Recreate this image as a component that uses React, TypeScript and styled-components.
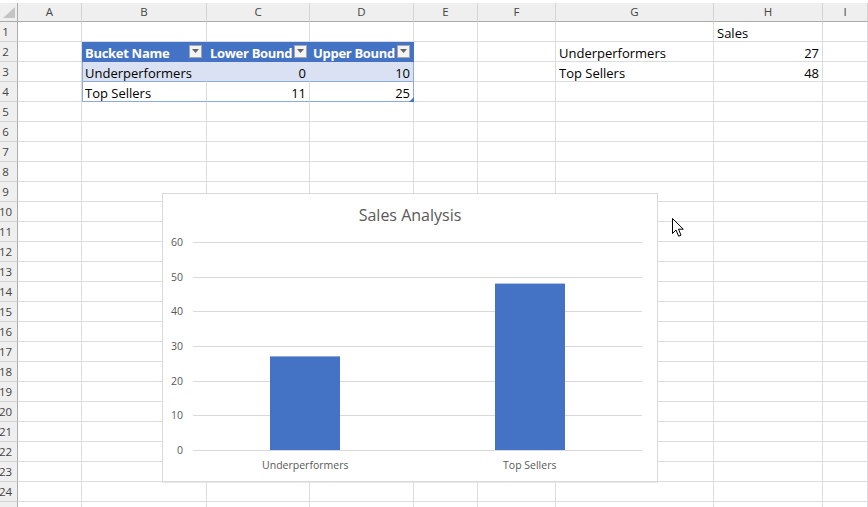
import styled, { createGlobalStyle } from "styled-components";

const GlobalStyle = createGlobalStyle`
  html, body {
    margin: 0;
    padding: 0;
    background: #fff;
    overflow: hidden;
  }
  body {
    font-family: "Open Sans", "Noto Sans", sans-serif;
  }
  * {
    box-sizing: border-box;
  }
`;

type Kind = "plain" | "head" | "band" | "body";

interface CellData {
  text: string;
  align?: "left" | "right";
}

const COLUMNS = ["A", "B", "C", "D", "E", "F", "G", "H", "I"];
const ROW_COUNT = 25;
const LAST_NUMBERED_ROW = 24;
const TABLE_COLS = ["B", "C", "D"];

const values: Record<string, CellData> = {
  B2: { text: "Bucket Name" },
  C2: { text: "Lower Bound" },
  D2: { text: "Upper Bound" },
  B3: { text: "Underperformers" },
  C3: { text: "0", align: "right" },
  D3: { text: "10", align: "right" },
  B4: { text: "Top Sellers" },
  C4: { text: "11", align: "right" },
  D4: { text: "25", align: "right" },
  H1: { text: "Sales" },
  G2: { text: "Underperformers" },
  H2: { text: "27", align: "right" },
  G3: { text: "Top Sellers" },
  H3: { text: "48", align: "right" },
};

const sales = [
  { label: "Underperformers", value: 27 },
  { label: "Top Sellers", value: 48 },
];

function tableKind(col: string, row: number): Kind {
  if (!TABLE_COLS.includes(col)) return "plain";
  if (row === 2) return "head";
  if (row === 3) return "band";
  if (row === 4) return "body";
  return "plain";
}

const GRID = "#dadcdd";
const TABLE_LINE = "#8ea9db";
const fills: Record<Kind, string> = {
  plain: "#fff",
  head: "#4472c4",
  band: "#d9e1f2",
  body: "#fff",
};

function rightLine(kind: Kind, last: boolean) {
  if (kind === "plain") return GRID;
  if (kind === "head") return fills.head;
  if (last) return TABLE_LINE;
  return kind === "band" ? fills.band : GRID;
}

function bottomLine(kind: Kind) {
  if (kind === "plain") return GRID;
  if (kind === "head") return fills.head;
  return TABLE_LINE;
}

export default function App() {
  const rows = Array.from({ length: ROW_COUNT }, (_, i) => i + 1);

  return (
    <>
      <GlobalStyle />
      <Sheet>
        <TopStrip />
        <Corner />
        {COLUMNS.map((c) => (
          <ColHead key={c}>{c}</ColHead>
        ))}
        {rows.map((row) => (
          <Row key={row} row={row} />
        ))}
        <SalesChart />
        <Pointer />
      </Sheet>
    </>
  );
}

function Row({ row }: { row: number }) {
  return (
    <>
      <RowHead>{row <= LAST_NUMBERED_ROW ? row : ""}</RowHead>
      {COLUMNS.map((col) => {
        const data = values[col + row];
        const kind = tableKind(col, row);
        return (
          <Cell
            key={col}
            $kind={kind}
            $right={data?.align === "right"}
            $first={col === "B"}
            $last={col === "D"}
          >
            {data && <span>{data.text}</span>}
            {kind === "head" && <FilterButton />}
            {kind === "body" && col === "D" && <ResizeHandle />}
          </Cell>
        );
      })}
    </>
  );
}

function FilterButton() {
  return (
    <Filter>
      <svg width="7" height="4" viewBox="0 0 7 4">
        <path d="M0 0h7L3.5 4z" fill="#666" />
      </svg>
    </Filter>
  );
}

function SalesChart() {
  const plotLeft = 30;
  const plotRight = 479;
  const zeroY = 226;
  const step = 208 / 6;
  const catWidth = (plotRight - plotLeft) / sales.length;
  const ticks = [0, 1, 2, 3, 4, 5, 6];

  return (
    <ChartBox>
      <ChartTitle>Sales Analysis</ChartTitle>
      <svg width="494" height="257" viewBox="0 0 494 257">
        {ticks.map((t) => {
          const y = Math.round(zeroY - t * step) + 0.5;
          return (
            <g key={t}>
              <line
                x1={plotLeft}
                x2={plotRight}
                y1={y}
                y2={y}
                stroke="#d9d9d9"
                strokeWidth="1"
                shapeRendering="crispEdges"
              />
              <AxisText x={20} y={y + 3.6} textAnchor="end">
                {t * 10}
              </AxisText>
            </g>
          );
        })}
        {sales.map((s, i) => {
          const center = plotLeft + catWidth * i + catWidth / 2;
          const h = (s.value / 10) * step;
          return (
            <g key={s.label}>
              <rect
                x={Math.round(center - 35)}
                y={zeroY - h}
                width="70"
                height={h}
                fill="#4472c4"
              />
              <AxisText x={center} y={245} textAnchor="middle">
                {s.label}
              </AxisText>
            </g>
          );
        })}
      </svg>
    </ChartBox>
  );
}

function Pointer() {
  return (
    <Cursor width="13" height="20" viewBox="0 0 13 20">
      <path
        d="M0.5 0.5 L0.5 15.5 L4 12 L6.6 18.2 L9 17.2 L6.5 11.2 L11.3 11.2 Z"
        fill="#fff"
        stroke="#000"
        strokeWidth="1"
        strokeLinejoin="miter"
      />
    </Cursor>
  );
}

const Sheet = styled.div`
  position: relative;
  display: grid;
  grid-template-columns: 18px 64px 125px 103px 104px 64px 78px 158px 109px 1fr;
  grid-template-rows: 3px 19px;
  grid-auto-rows: 20px;
  width: 868px;
  height: 507px;
  overflow: hidden;
  font-family: "Open Sans", "Noto Sans", sans-serif;
`;

const TopStrip = styled.div`
  grid-column: 1 / -1;
  background: #fff;
`;

const Corner = styled.div`
  position: relative;
  background: #efefef;
  border-right: 1px solid #ababab;
  border-bottom: 1px solid #ababab;

  &::after {
    content: "";
    position: absolute;
    right: 2px;
    bottom: 3px;
    width: 12px;
    height: 11px;
    background: #c4c4c4;
    clip-path: polygon(100% 0, 100% 100%, 0 100%);
  }
`;

const ColHead = styled.div`
  display: flex;
  align-items: center;
  justify-content: center;
  background: #efefef;
  border-right: 1px solid #d4d4d4;
  border-bottom: 1px solid #ababab;
  color: #444;
  font-size: 11.5px;
  line-height: 1;
`;

const RowHead = styled.div`
  display: flex;
  align-items: center;
  justify-content: center;
  padding-right: 6px;
  background: #efefef;
  border-right: 1px solid #ababab;
  border-bottom: 1px solid #d4d4d4;
  color: #444;
  font-size: 11.5px;
  white-space: nowrap;
`;

const Cell = styled.div<{
  $kind: Kind;
  $right: boolean;
  $first: boolean;
  $last: boolean;
}>`
  position: relative;
  display: flex;
  align-items: flex-end;
  justify-content: ${(p) =>
    p.$kind === "head"
      ? "space-between"
      : p.$right
      ? "flex-end"
      : "flex-start"};
  padding: 0 3px;
  background: ${(p) => fills[p.$kind]};
  border-right: 1px solid ${(p) => rightLine(p.$kind, p.$last)};
  border-bottom: 1px solid ${(p) => bottomLine(p.$kind)};
  box-shadow: ${(p) =>
    p.$first && p.$kind !== "plain" && p.$kind !== "head"
      ? `inset 1px 0 0 ${TABLE_LINE}`
      : "none"};
  color: ${(p) => (p.$kind === "head" ? "#fff" : "#000")};
  font-size: 13px;
  font-weight: ${(p) => (p.$kind === "head" ? 700 : 400)};
  letter-spacing: ${(p) => (p.$kind === "head" ? "-0.3px" : "0")};
  line-height: 15px;
  white-space: nowrap;
`;

const Filter = styled.div`
  align-self: center;
  display: flex;
  align-items: center;
  justify-content: center;
  flex: none;
  width: 13px;
  height: 13px;
  margin: 0 1px 1px 2px;
  background: #f3f3f3;
  border: 1px solid #a6a6a6;
`;

const ResizeHandle = styled.div`
  position: absolute;
  right: -1px;
  bottom: -1px;
  width: 5px;
  height: 5px;
  background: #4472c4;
  clip-path: polygon(100% 0, 100% 100%, 0 100%);
`;

const ChartBox = styled.div`
  position: absolute;
  left: 162px;
  top: 193px;
  width: 496px;
  height: 289px;
  display: flex;
  flex-direction: column;
  background: #fff;
  border: 1px solid #d9d9d9;
  box-shadow: 0 1px 0 #e8e8e8;
`;

const ChartTitle = styled.div`
  padding-top: 11px;
  height: 30px;
  text-align: center;
  color: #595959;
  font-size: 16px;
  line-height: 20px;
`;

const AxisText = styled.text`
  font-family: "Open Sans", "Noto Sans", sans-serif;
  font-size: 10.5px;
  fill: #595959;
`;

const Cursor = styled.svg`
  position: absolute;
  left: 672px;
  top: 218px;
`;
